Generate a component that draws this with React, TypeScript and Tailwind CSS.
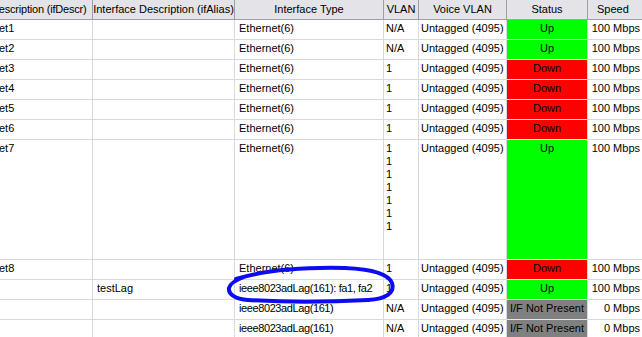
import React from "react";

type Row = {
  d: string;
  alias: string;
  type: string;
  vlan: string[];
  voice: string;
  status: "Up" | "Down" | "I/F Not Present";
  speed: string;
  tall?: boolean;
};

const rows: Row[] = [
  { d: "et1", alias: "", type: "Ethernet(6)", vlan: ["N/A"], voice: "Untagged (4095)", status: "Up", speed: "100 Mbps" },
  { d: "et2", alias: "", type: "Ethernet(6)", vlan: ["N/A"], voice: "Untagged (4095)", status: "Up", speed: "100 Mbps" },
  { d: "et3", alias: "", type: "Ethernet(6)", vlan: ["1"], voice: "Untagged (4095)", status: "Down", speed: "100 Mbps" },
  { d: "et4", alias: "", type: "Ethernet(6)", vlan: ["1"], voice: "Untagged (4095)", status: "Down", speed: "100 Mbps" },
  { d: "et5", alias: "", type: "Ethernet(6)", vlan: ["1"], voice: "Untagged (4095)", status: "Down", speed: "100 Mbps" },
  { d: "et6", alias: "", type: "Ethernet(6)", vlan: ["1"], voice: "Untagged (4095)", status: "Down", speed: "100 Mbps" },
  { d: "et7", alias: "", type: "Ethernet(6)", vlan: ["1", "1", "1", "1", "1", "1", "1"], voice: "Untagged (4095)", status: "Up", speed: "100 Mbps", tall: true },
  { d: "et8", alias: "", type: "Ethernet(6)", vlan: ["1"], voice: "Untagged (4095)", status: "Down", speed: "100 Mbps" },
  { d: "", alias: "testLag", type: "ieee8023adLag(161): fa1, fa2", vlan: ["1"], voice: "Untagged (4095)", status: "Up", speed: "100 Mbps" },
  { d: "", alias: "", type: "ieee8023adLag(161)", vlan: ["N/A"], voice: "Untagged (4095)", status: "I/F Not Present", speed: "0 Mbps" },
  { d: "", alias: "", type: "ieee8023adLag(161)", vlan: ["N/A"], voice: "Untagged (4095)", status: "I/F Not Present", speed: "0 Mbps" },
];

const statusBg: Record<string, string> = {
  Up: "bg-[#00ff00]",
  Down: "bg-[#ff0000]",
  "I/F Not Present": "bg-[#808080]",
};

function Cell({ children, className = "", tall }: { children?: React.ReactNode; className?: string; tall?: boolean }) {
  return (
    <div
      className={`${tall ? "h-[120px]" : "h-[20px]"} border-r border-b border-[#d9d9d9] overflow-hidden whitespace-nowrap leading-[13px] pt-[2px] ${className}`}
    >
      {children}
    </div>
  );
}

function Head({ children, className = "" }: { children?: React.ReactNode; className?: string }) {
  return (
    <div
      className={`h-[20px] border-r border-b border-[#a0a0a0] bg-[#e3e3e8] overflow-hidden whitespace-nowrap leading-[13px] pt-[3px] text-center ${className}`}
    >
      {children}
    </div>
  );
}

export default function App() {
  return (
    <div className="w-[642px] h-[337px] overflow-hidden bg-white text-black text-[11px] font-['Liberation_Sans',Arial,sans-serif]">
      <div className="relative">
        <div className="grid grid-cols-[93px_142px_149px_35px_88px_81px_70px]">
          <Head className="text-left">
            <span className="ml-[-9px] tracking-[-0.2px]">Description (ifDescr)</span>
          </Head>
          <Head>Interface Description (ifAlias)</Head>
          <Head>Interface Type</Head>
          <Head>VLAN</Head>
          <Head>Voice VLAN</Head>
          <Head>Status</Head>
          <Head className="text-left pl-[9px]">Speed</Head>

          {rows.map((r, i) => (
            <React.Fragment key={i}>
              <Cell tall={r.tall} className="pl-0">
                <span className="ml-[-1px]">{r.d}</span>
              </Cell>
              <Cell tall={r.tall} className="pl-[4px]">{r.alias}</Cell>
              <Cell tall={r.tall} className="pl-[4px]">
                <span className={r.type.startsWith("ieee") ? "tracking-[-0.4px]" : ""}>{r.type}</span>
              </Cell>
              <Cell tall={r.tall} className="pl-[2px]">
                <div className="flex flex-col">
                  {r.vlan.map((v, j) => (
                    <span key={j} className="leading-[13px]">{v}</span>
                  ))}
                </div>
              </Cell>
              <Cell tall={r.tall} className="pl-[2px]">{r.voice}</Cell>
              <Cell tall={r.tall} className={`text-center border-b-[#e8e8e8] ${statusBg[r.status]}`}>
                {r.status}
              </Cell>
              <Cell tall={r.tall} className="text-right pr-[18px] border-r-0">
                {r.speed}
              </Cell>
            </React.Fragment>
          ))}
        </div>

        <svg
          className="absolute left-0 top-0 pointer-events-none"
          width="642"
          height="337"
          viewBox="0 0 642 337"
        >
          <path
            d="M236 279 C 262 271, 300 267, 345 268 C 370 269, 388 273, 392 283 C 395 293, 386 299, 368 300 C 330 302, 280 302, 248 300 C 235 299, 228 294, 229 288 C 230 283, 236 280, 244 277"
            fill="none"
            stroke="#0c0cf0"
            strokeWidth="4"
            strokeLinecap="round"
          />
        </svg>
      </div>
    </div>
  );
}
